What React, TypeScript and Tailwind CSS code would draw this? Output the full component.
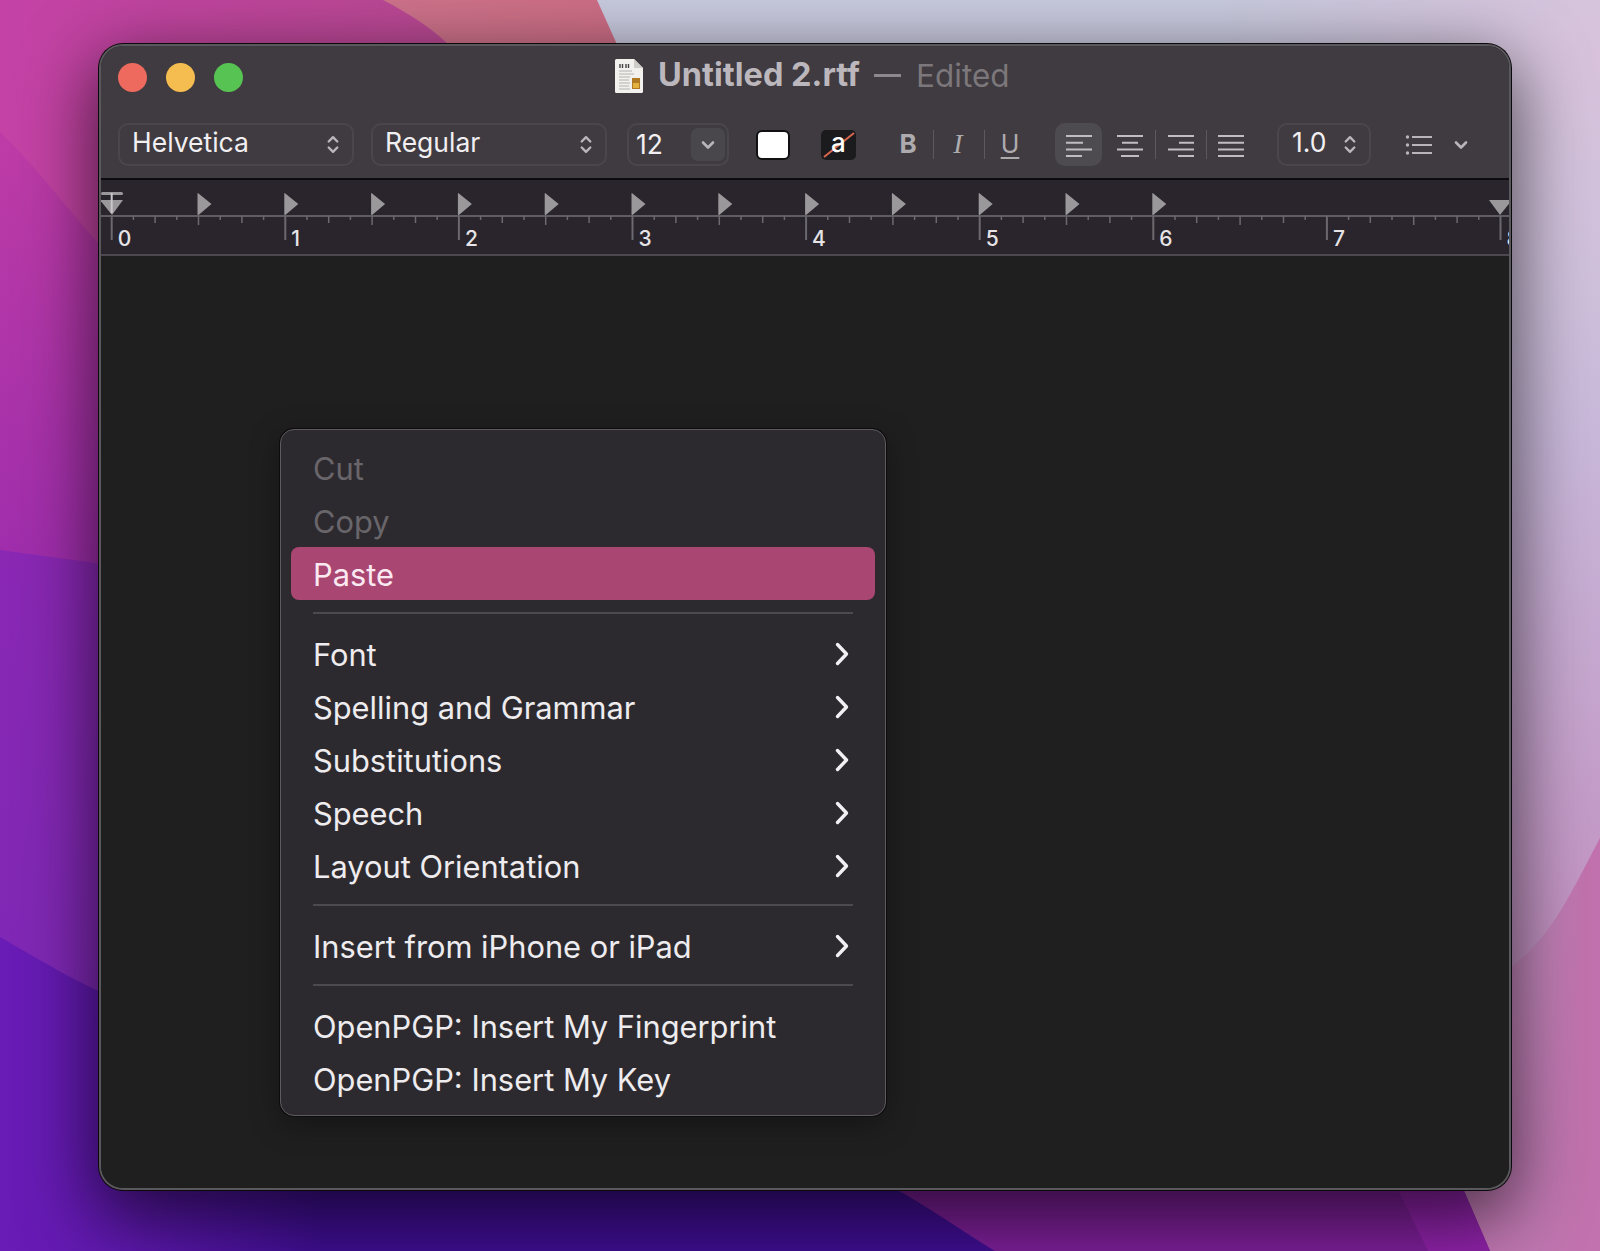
import type { ReactNode } from 'react';

const RULER_ORIGIN = 10.7;
const INCH = 173.6;

type MenuEntry = { label?: string; disabled?: boolean; active?: boolean; submenu?: boolean; separator?: boolean };

const menuEntries: MenuEntry[] = [
  { label: 'Cut', disabled: true },
  { label: 'Copy', disabled: true },
  { label: 'Paste', active: true },
  { separator: true },
  { label: 'Font', submenu: true },
  { label: 'Spelling and Grammar', submenu: true },
  { label: 'Substitutions', submenu: true },
  { label: 'Speech', submenu: true },
  { label: 'Layout Orientation', submenu: true },
  { separator: true },
  { label: 'Insert from iPhone or iPad', submenu: true },
  { separator: true },
  { label: 'OpenPGP: Insert My Fingerprint' },
  { label: 'OpenPGP: Insert My Key' },
];

const Wallpaper = () => (
  <svg className="absolute inset-0 h-full w-full" viewBox="0 0 1600 1251" preserveAspectRatio="none">
    <defs>
      <linearGradient id="light" x1="0" y1="0" x2="0" y2="1">
        <stop offset="0" stopColor="#c8cade" />
        <stop offset="0.35" stopColor="#c9b8da" />
        <stop offset="0.65" stopColor="#c49cc8" />
        <stop offset="1" stopColor="#c07ab4" />
      </linearGradient>
      <radialGradient id="topRight" gradientUnits="userSpaceOnUse" cx="1600" cy="60" r="380">
        <stop offset="0" stopColor="#d8c2dc" />
        <stop offset="1" stopColor="#d8c2dc" stopOpacity="0" />
      </radialGradient>
      <linearGradient id="lowerRight" gradientUnits="userSpaceOnUse" x1="1535" y1="0" x2="1585" y2="0">
        <stop offset="0" stopColor="#c272ae" stopOpacity="0.35" />
        <stop offset="1" stopColor="#c272ae" />
      </linearGradient>
      <linearGradient id="magenta" x1="0" y1="0" x2="1" y2="0">
        <stop offset="0" stopColor="#c442a6" />
        <stop offset="1" stopColor="#b84a90" />
      </linearGradient>
      <linearGradient id="pink" x1="0" y1="0" x2="1" y2="0">
        <stop offset="0" stopColor="#d07c94" />
        <stop offset="1" stopColor="#cc6c84" />
      </linearGradient>
      <linearGradient id="band2" gradientUnits="userSpaceOnUse" x1="0" y1="132" x2="0" y2="550">
        <stop offset="0" stopColor="#be3ca6" />
        <stop offset="1" stopColor="#a02eac" />
      </linearGradient>
      <linearGradient id="band3" x1="0" y1="0" x2="0" y2="1">
        <stop offset="0" stopColor="#8a28b4" />
        <stop offset="1" stopColor="#7c28b6" />
      </linearGradient>
      <linearGradient id="band4" gradientUnits="userSpaceOnUse" x1="0" y1="0" x2="320" y2="0">
        <stop offset="0" stopColor="#6a1cb6" />
        <stop offset="0.4" stopColor="#5e18ae" />
        <stop offset="1" stopColor="#3f0e92" />
      </linearGradient>
    </defs>
    <rect width="1600" height="1251" fill="url(#light)" />
    <rect width="1600" height="1251" fill="url(#topRight)" />
    <path d="M1600 838C1575 885 1555 930 1520 960L1470 1000L1470 1251L1600 1251Z" fill="url(#lowerRight)" />
    <path d="M0 0L597 0L687 200L687 1251L0 1251Z" fill="url(#pink)" />
    <path d="M0 0L383 0C410 14 435 30 454 50L500 300L0 300Z" fill="url(#magenta)" />
    <path d="M0 132C40 170 75 220 110 255L500 280L500 600L0 600Z" fill="url(#band2)" />
    <path d="M0 550L110 565L500 600L500 1100L0 1100Z" fill="url(#band3)" />
    <path d="M0 937C40 960 80 985 120 1000L1000 1100L1000 1251L0 1251Z" fill="url(#band4)" />
    <path d="M860 1170C920 1200 960 1230 995 1251L1490 1251L1455 1170Z" fill="#7d1f98" />
    <path d="M1388 1170L1428 1251L1490 1251L1455 1170Z" fill="#8e22a8" />
  </svg>
);

const Stepper = () => (
  <svg width="12" height="19" viewBox="0 0 14 22" fill="none" stroke="#b9b6ba" strokeWidth="2.8" strokeLinecap="round" strokeLinejoin="round">
    <path d="M2 7.5L7 2.5L12 7.5" />
    <path d="M2 14.5L7 19.5L12 14.5" />
  </svg>
);

const ChevronDown = () => (
  <svg width="14" height="10" viewBox="0 0 14 10" fill="none" stroke="#b9b6ba" strokeWidth="2.6" strokeLinecap="round" strokeLinejoin="round">
    <path d="M2 2.5L7 7.500L12 2.500" />
  </svg>
);

const Select = ({ label, className, children }: { label: string; className: string; children?: ReactNode }) => (
  <div className={`flex h-[43px] items-center justify-between rounded-[10px] border-2 border-[#4a474c] pl-[12px] pr-[13px] text-[26.500px] leading-none text-[#f1eff1] ${className}`}>
    <span className={children ? '' : 'mb-[4px]'}>{label}</span>
    {children ?? <Stepper />}
  </div>
);

const Divider = ({ className }: { className: string }) => <div className={`h-[29px] w-px bg-[#5c595e] ${className}`} />;

// bars are [x1, x2] inside a 26 wide box
const AlignIcon = ({ bars }: { bars: [number, number][] }) => (
  <svg width="26" height="24" viewBox="0 0 26 24" stroke="#c0bdc1" strokeWidth="2">
    {bars.map(([a, b], i) => (
      <line key={i} x1={a} x2={b} y1={3 + i * 6.7} y2={3 + i * 6.7} />
    ))}
  </svg>
);

const FileIcon = () => (
  <svg width="30" height="36" viewBox="0 0 30 36">
    <path d="M1 2.5Q1 1 2.5 1H20L29 10V33.5Q29 35 27.5 35H2.5Q1 35 1 33.5Z" fill="#f3f1ee" />
    <path d="M20 1V10H29Z" fill="#cfccc8" />
    <path d="M6 6V10M8.5 6V10M12 6V10M14.5 6V10" stroke="#444" strokeWidth="1.4" />
    <path d="M5 13H18M5 16H20M5 19H16M5 22H15M5 25H16M5 28H15M5 31H16" stroke="#b4b2b0" strokeWidth="1" />
    <rect x="18" y="20" width="8" height="11" fill="#b07a22" />
    <rect x="19" y="25" width="6" height="5" fill="#e2b23c" />
  </svg>
);

const Ruler = () => {
  const ticks = Array.from({ length: 66 }, (_, i) => i);
  const tabs = Array.from({ length: 12 }, (_, i) => RULER_ORIGIN + (i + 1) * (INCH / 2));
  const numbers = [0, 1, 2, 3, 4, 5, 6, 7, 8];
  return (
    <div className="h-[76px] shrink-0 border-b-2 border-[#4b494d] bg-[#2a252c]">
      <svg className="block" width="1408" height="74" viewBox="0 0 1408 74">
        <line x1="0" x2="1408" y1="36" y2="36" stroke="#5f5c62" strokeWidth="2" />
        {ticks.map((i) => {
          const end = i % 8 === 0 ? 60 : i % 4 === 0 ? 45 : i % 2 === 0 ? 43 : 40;
          const x = RULER_ORIGIN + (i * INCH) / 8;
          return <line key={i} x1={x} x2={x} y1="36" y2={end} stroke="#6b686e" strokeWidth={i % 8 === 0 ? 2 : 1.5} />;
        })}
        {tabs.map((x) => (
          <path key={x} d={`M${x - 1} 14Q${x - 1} 12.500 ${x} 13.500L${x + 13} 24L${x} 35Q${x - 1} 35.500 ${x - 1} 34Z`} fill="#9b989c" />
        ))}
        {numbers.map((n) => (
          <text key={n} x={RULER_ORIGIN + n * INCH + 6} y="66" fontSize="21" fontWeight="500" fill="#e6e4e6" fontFamily="Inter, sans-serif">
            {n}
          </text>
        ))}
        {/* first line and left indent marker */}
        <rect x="0" y="12" width="22" height="3" rx="1.5" fill="#9b989c" />
        <path d="M-1 20H22L11 35Z" fill="#9b989c" />
        <line x1="10.700" x2="10.700" y1="13" y2="33" stroke="#c8c6c9" strokeWidth="2" />
        {/* right margin marker */}
        <path d="M1388 20H1411L1399 35Z" fill="#9b989c" />
      </svg>
    </div>
  );
};

const ContextMenu = () => (
  <div className="absolute left-[179px] top-[173px] w-[606px] rounded-[14px] border border-[#5d5b60] bg-[#2d2a2f] pb-[10px] pt-[11px] shadow-[0_0_0_1px_#0c0c0c,0_8px_30px_rgba(0,0,0,0.35)]">
    {menuEntries.map((entry, i) =>
      entry.separator ? (
        <div key={i} className="flex h-[27px] items-center px-[32px] pb-[2px]">
          <div className="h-[2px] w-full bg-[#4c4a4f]" />
        </div>
      ) : (
        <div
          key={i}
          className={`mx-[10px] flex h-[53px] items-center justify-between rounded-[8px] pl-[22px] pr-[26px] text-[30.800px] leading-none ${
            entry.active ? 'bg-[#a94672] text-[#fbe9f1]' : entry.disabled ? 'text-[#69666b]' : 'text-[#eeecee]'
          }`}
        >
          <span className="mt-[3px]">{entry.label}</span>
          {entry.submenu && (
            <svg width="14" height="24" viewBox="0 0 14 24" fill="none" stroke="#f2f0f2" strokeWidth="3.400" strokeLinecap="round" strokeLinejoin="round">
              <path d="M2.500 2.500L11.500 12L2.500 21.500" />
            </svg>
          )}
        </div>
      ),
    )}
  </div>
);

const App = () => (
  <div className="relative h-[1251px] w-[1600px] overflow-hidden pl-[99px] pt-[44px] font-[family-name:Inter,sans-serif]">
    <Wallpaper />

    <div className="relative flex h-[1146px] w-[1412px] flex-col overflow-hidden rounded-[24px] border-2 border-[#5b585d] bg-[#1f1f1f] shadow-[0_0_0_1px_#0a0a0a,0_22px_70px_6px_rgba(0,0,0,0.62)]">
      {/* Title bar and toolbar */}
      <div className="h-[134px] shrink-0 border-b-2 border-[#0c0b0d] bg-[#3f3b40] pt-[17px]">
        <div className="flex h-[29px] items-center pl-[17px]">
          <div className="flex gap-[19px]">
            <div className="h-[29px] w-[29px] rounded-full bg-[#ee6a5e]" />
            <div className="h-[29px] w-[29px] rounded-full bg-[#f5bd4f]" />
            <div className="h-[29px] w-[29px] rounded-full bg-[#57c353]" />
          </div>
          <div className="mb-[4px] ml-[371px] flex items-center">
            <FileIcon />
            <span className="ml-[14px] text-[32.500px] font-bold leading-none text-[#bcb7bc]">Untitled 2.rtf</span>
            <span className="ml-[14px] h-[3px] w-[27px] bg-[#8c888c]" />
            <span className="ml-[15px] text-[31.500px] leading-none text-[#7b777b]">Edited</span>
          </div>
        </div>

        <div className="mt-[31px] flex items-center pl-[17px]">
          <Select label="Helvetica" className="w-[236px]" />
          <Select label="Regular" className="ml-[17px] w-[236px]" />
          <Select label="12" className="ml-[20px] w-[102px] !pl-[7px] !pr-[2px]">
            <div className="flex h-[33px] w-[34px] items-center justify-center rounded-[7px] bg-[#4a474c]">
              <ChevronDown />
            </div>
          </Select>
          <div className="ml-[27px] h-[30px] w-[34px] rounded-[6px] border-2 border-[#111013] bg-white" />
          <div className="relative ml-[31px] flex h-[30px] w-[35px] items-center justify-center rounded-[5px] bg-[#1b1a1c] text-[26px] font-medium leading-none text-white">
            <svg className="absolute inset-0" width="35" height="30" viewBox="0 0 35 30">
              <line x1="3" y1="27" x2="33" y2="3" stroke="#d9674f" strokeWidth="2" />
            </svg>
            <span className="relative mb-[3px]">a</span>
          </div>
          <div className="ml-[37px] mb-[2px] w-[30px] text-center text-[26px] font-bold leading-none text-[#aeabaf]">B</div>
          <Divider className="ml-[10px]" />
          <div className="ml-[9px] mb-[2px] w-[30px] text-center font-[family-name:Liberation_Serif,serif] text-[28px] italic leading-none text-[#aeabaf]">I</div>
          <Divider className="ml-[11px]" />
          <div className="ml-[10px] w-[30px] text-center text-[25px] leading-none text-[#aeabaf] underline decoration-2 underline-offset-[4px]">U</div>
          <div className="ml-[30px] flex h-[43px] w-[47px] items-center justify-center rounded-[10px] bg-[#4e4b50]">
            <AlignIcon bars={[[0, 26], [0, 17], [0, 26], [0, 16]]} />
          </div>
          <div className="ml-[15px]">
            <AlignIcon bars={[[0, 26], [5, 21], [0, 26], [4, 22]]} />
          </div>
          <Divider className="ml-[12px]" />
          <div className="ml-[12px]">
            <AlignIcon bars={[[0, 26], [11, 26], [0, 26], [10, 26]]} />
          </div>
          <Divider className="ml-[12px]" />
          <div className="ml-[11px]">
            <AlignIcon bars={[[0, 26], [0, 26], [0, 26], [0, 26]]} />
          </div>
          <Select label="1.0" className="ml-[33px] w-[94px] !pl-[13px]" />
          <svg className="ml-[34px]" width="28" height="22" viewBox="0 0 28 22" stroke="#b9b6ba" strokeWidth="2">
            <path d="M7 3H27M7 11H27M7 19H27" />
            <circle cx="2.500" cy="3" r="1.700" fill="#b9b6ba" stroke="none" />
            <circle cx="2.500" cy="11" r="1.700" fill="#b9b6ba" stroke="none" />
            <circle cx="2.500" cy="19" r="1.700" fill="#b9b6ba" stroke="none" />
          </svg>
          <div className="ml-[21px]">
            <ChevronDown />
          </div>
        </div>
      </div>

      <Ruler />

      {/* Text area */}
      <div className="relative flex-1 bg-[#1f1f1f]">
        <ContextMenu />
      </div>
    </div>
  </div>
);

export default App;
